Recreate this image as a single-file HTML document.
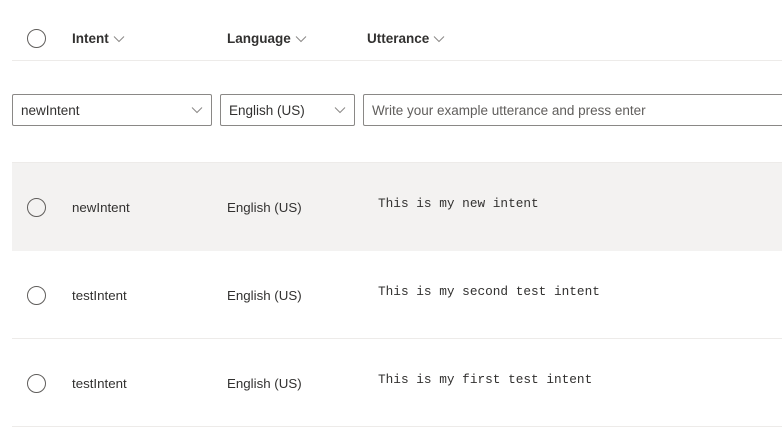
<!DOCTYPE html>
<html><head><style>
*{margin:0;padding:0;box-sizing:border-box}
body{width:782px;height:437px;overflow:hidden;background:#fff;font-family:"Liberation Sans",sans-serif;color:#323130;position:relative}
.a{position:absolute}
.hd{font-size:13.5px;font-weight:bold;color:#323130;top:31px}
.circ{width:19px;height:19px;border:1px solid #605e5c;border-radius:50%}
.box{border:1px solid #8a8886;border-radius:2px;height:32px;top:94px;font-size:13.5px;line-height:31px;padding-left:8px}
.cell{font-size:13.3px;color:#323130}
.mono{font-family:"Liberation Mono",monospace;font-size:12.75px;color:#323130}
.line{height:1px;background:#edebe9;left:12px;right:0}
</style></head><body>
<div class="a circ" style="left:27px;top:29px"></div>
<div class="a hd" style="left:72px">Intent <svg width="12" height="8" viewBox="0 0 12 8"><path d="M1 1.5l5 5 5-5" fill="none" stroke="#8a8886" stroke-width="1"/></svg></div>
<div class="a hd" style="left:227px">Language <svg width="12" height="8" viewBox="0 0 12 8"><path d="M1 1.5l5 5 5-5" fill="none" stroke="#8a8886" stroke-width="1"/></svg></div>
<div class="a hd" style="left:367px">Utterance <svg width="12" height="8" viewBox="0 0 12 8"><path d="M1 1.5l5 5 5-5" fill="none" stroke="#8a8886" stroke-width="1"/></svg></div>
<div class="a line" style="top:60px"></div>

<div class="a box" style="left:12px;width:200px">newIntent<svg class="a" style="right:8px;top:11px" width="12" height="8" viewBox="0 0 12 8"><path d="M1 1.5l5 5 5-5" fill="none" stroke="#8a8886"/></svg></div>
<div class="a box" style="left:220px;width:135px">English (US)<svg class="a" style="right:8px;top:11px" width="12" height="8" viewBox="0 0 12 8"><path d="M1 1.5l5 5 5-5" fill="none" stroke="#8a8886"/></svg></div>
<div class="a box" style="left:363px;width:440px;color:#605e5c">Write your example utterance and press enter</div>

<div class="a" style="left:12px;right:0;top:162px;height:89px;background:#f3f2f1;border-top:1px solid #edebe9"></div>
<div class="a line" style="top:338px"></div>
<div class="a line" style="top:426px"></div>

<div class="a circ" style="left:27px;top:198px"></div>
<div class="a cell" style="left:72px;top:200px">newIntent</div>
<div class="a cell" style="left:227px;top:200px">English (US)</div>
<div class="a mono" style="left:378px;top:196px">This is my new intent</div>

<div class="a circ" style="left:27px;top:286px"></div>
<div class="a cell" style="left:72px;top:288px">testIntent</div>
<div class="a cell" style="left:227px;top:288px">English (US)</div>
<div class="a mono" style="left:378px;top:284px">This is my second test intent</div>

<div class="a circ" style="left:27px;top:374px"></div>
<div class="a cell" style="left:72px;top:376px">testIntent</div>
<div class="a cell" style="left:227px;top:376px">English (US)</div>
<div class="a mono" style="left:378px;top:372px">This is my first test intent</div>
</body></html>
